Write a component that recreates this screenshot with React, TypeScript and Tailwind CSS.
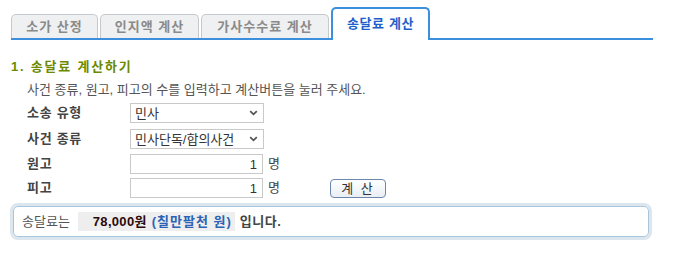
import React, { useState } from 'react';

const tabs = ['소가 산정', '인지액 계산', '가사수수료 계산', '송달료 계산'];
const tabWidths = ['w-[87px]', 'w-[99px]', 'w-[128px]', 'w-[99px]'];

const Chevron: React.FC = () => (
  <svg width="9" height="6" viewBox="0 0 9 6" className="absolute right-[6px] top-[7px] pointer-events-none">
    <path d="M1.2 1.2 L4.5 4.3 L7.8 1.2" fill="none" stroke="#555" strokeWidth="1.8" />
  </svg>
);

const FieldRow: React.FC<{ label: string; h: string; children: React.ReactNode }> = ({ label, h, children }) => (
  <div className={`flex items-center ${h}`}>
    <div className="w-[120px] pl-[17px] font-bold tracking-[0.7px] text-[#444]">{label}</div>
    {children}
  </div>
);

export default function App() {
  const [active, setActive] = useState(3);
  const [suitType, setSuitType] = useState('민사');
  const [caseType, setCaseType] = useState('민사단독/합의사건');
  const [plaintiff, setPlaintiff] = useState('1');
  const [defendant, setDefendant] = useState('1');

  return (
    <div
      className="w-[673px] h-[253px] bg-white px-[10px] pt-[7px] text-[13px] text-[#555]"
      style={{ fontFamily: '"Liberation Sans", "Noto Sans CJK KR", sans-serif' }}
    >
      {/* tabs */}
      <div className="ml-[1px] w-[642px] flex items-end gap-[2px] h-[33px] border-b-2 border-[#3b8fdd]">
        {tabs.map((t, i) =>
          i === active ? (
            <div
              key={t}
              className={`${tabWidths[i]} h-[33px] -mb-[2px] flex items-center justify-center pb-[2px] bg-white border-2 border-b-0 border-[#3b8fdd] rounded-t-[5px] font-bold tracking-[0.6px] text-[#1f5fcc] cursor-pointer`}
            >
              {t}
            </div>
          ) : (
            <div
              key={t}
              onClick={() => setActive(i)}
              className={`${tabWidths[i]} h-[24px] flex items-center justify-center bg-[#eef0f2] border border-b-0 border-[#c6c9cc] rounded-t-[5px] font-bold tracking-[1px] text-[#8a8a8a] cursor-pointer`}
            >
              {t}
            </div>
          )
        )}
      </div>

      {/* heading */}
      <div className="mt-[19px] ml-[1px] h-[16px] leading-[16px] text-[13px] font-bold tracking-[1.8px] text-[#6b8a00]">
        1. 송달료 계산하기
      </div>
      <div className="mt-[7px] pl-[17px] h-[16px] leading-[16px] text-[#555]">
        사건 종류, 원고, 피고의 수를 입력하고 계산버튼을 눌러 주세요.
      </div>

      {/* form */}
      <div className="mt-[2px]">
        <FieldRow label="소송 유형" h="h-[26px]">
          <div className="relative w-[134px] h-[20px]">
            <select
              value={suitType}
              onChange={e => setSuitType(e.target.value)}
              className="appearance-none w-full h-full border border-[#c9c9c9] bg-white pl-[4px] text-[13px] text-[#333] outline-none"
            >
              <option>민사</option>
              <option>가사</option>
              <option>행정</option>
            </select>
            <Chevron />
          </div>
        </FieldRow>
        <FieldRow label="사건 종류" h="h-[26px]">
          <div className="relative w-[134px] h-[20px]">
            <select
              value={caseType}
              onChange={e => setCaseType(e.target.value)}
              className="appearance-none w-full h-full border border-[#c9c9c9] bg-white pl-[4px] text-[13px] text-[#333] outline-none"
            >
              <option>민사단독/합의사건</option>
              <option>소액사건</option>
              <option>항소사건</option>
            </select>
            <Chevron />
          </div>
        </FieldRow>
        <FieldRow label="원고" h="h-[24px]">
          <input
            value={plaintiff}
            onChange={e => setPlaintiff(e.target.value)}
            className="w-[133px] h-[20px] border border-[#c9c9c9] text-right pr-[5px] text-[13px] text-[#333] outline-none"
          />
          <span className="ml-[5px] text-[#444]">명</span>
        </FieldRow>
        <FieldRow label="피고" h="h-[24px]">
          <input
            value={defendant}
            onChange={e => setDefendant(e.target.value)}
            className="w-[133px] h-[20px] border border-[#c9c9c9] text-right pr-[5px] text-[13px] text-[#333] outline-none"
          />
          <span className="ml-[5px] text-[#444]">명</span>
          <button className="ml-[50px] w-[56px] h-[19px] border border-[#6f86ab] rounded-[4px] bg-gradient-to-b from-white to-[#e9eef5] text-[13px] tracking-[2px] text-[#333] leading-none">
            계 산
          </button>
        </FieldRow>
      </div>

      {/* result */}
      <div className="mt-[3px] w-[642px] border-[3px] border-[#dce6ee] rounded-[8px]">
        <div className="h-[31px] border border-[#a9c5db] rounded-[5px] bg-white flex items-center pl-[8px]">
          <span className="text-[#555]">송달료는</span>
          <span className="ml-[8px] h-[19px] flex items-center bg-[#eeeeee] pl-[15px] pr-[3px]">
            <span className="font-bold tracking-[0.3px] text-[#2a0a0a]">78,000원</span>
            <span className="ml-[5px] font-bold tracking-[1px] text-[#2b62b5]">(칠만팔천 원)</span>
          </span>
          <span className="ml-[5px] font-bold tracking-[0.5px] text-[#444]">입니다.</span>
        </div>
      </div>
    </div>
  );
}
